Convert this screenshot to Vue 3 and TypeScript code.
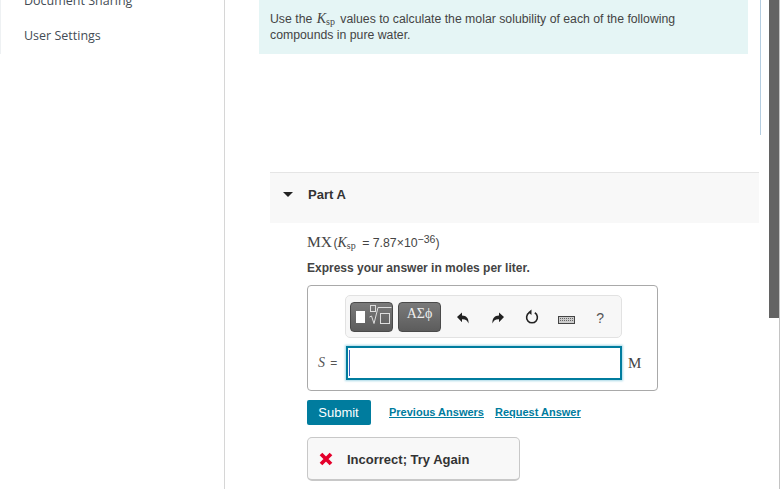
<script setup lang="ts">
const navItems: string[] = ['Document Sharing', 'User Settings']
</script>

<template>
  <div class="page">
    <aside class="side">
      <ul class="nav">
        <li v-for="item in navItems" :key="item">{{ item }}</li>
      </ul>
    </aside>
    <main class="main">
      <section class="intro-wrap">
        <div class="intro">
          Use the <i class="m k">K<sub>sp</sub></i> values to calculate the molar solubility of each of the following compounds in pure water.
        </div>
      </section>
      <section class="part">
        <header class="part-head">
          <span class="caret"></span>
          <span>Part A</span>
        </header>
        <div class="part-body">
          <p class="formula"><span class="m mx">MX</span> (<i class="m k2">K<sub>sp</sub></i> = 7.87×10<sup>−36</sup>)</p>
          <p class="express">Express your answer in moles per liter.</p>
          <div class="answer">
            <div class="toolbar">
              <button class="tool t1" aria-label="Templates">
                <span class="sq"></span>
                <svg width="23" height="24" viewBox="0 0 23 24" fill="none" stroke="#ddd" stroke-width="1">
                  <rect x="1.500" y="0.500" width="5" height="6" />
                  <path d="M0.500 12l2-1 2.500 7.500L9 2.500h13.500" />
                  <rect x="11.500" y="8.500" width="9" height="10" />
                </svg>
              </button>
              <button class="tool t2">ΑΣϕ</button>
              <div class="actions">
                <span class="cell"><svg class="arrow" width="14" height="14" viewBox="0 0 14 14" fill="#222"><path d="M1 6l5-4.500V4.500c4.500 0 7 3 6.500 8-1-3-3-4.500-6.500-4.300v3z" /></svg></span>
                <span class="cell"><svg class="arrow" width="14" height="14" viewBox="0 0 14 14" fill="#222"><path d="M13 6L8 1.500V4.500c-4.500 0-7 3-6.500 8 1-3 3-4.500 6.500-4.300v3z" /></svg></span>
                <span class="cell"><svg width="16" height="16" viewBox="0 0 16 16" fill="none" stroke="#222" stroke-width="1.600"><path d="M5.200 3.800a5.400 5.400 0 1 0 5.600 0" /><path d="M7.500 0.500v5.600L4.200 3.300z" fill="#222" stroke="none" /></svg></span>
                <span class="cell"><svg class="kbd" width="17" height="8" viewBox="0 0 17 8" fill="#ccc" stroke="#444" stroke-width="1"><rect x="0.500" y="0.500" width="16" height="7" /><path d="M2 2.500h13M2 4.500h13" stroke-dasharray="1 1" stroke="#666" /></svg></span>
                <span class="cell help">?</span>
              </div>
            </div>
            <div class="input-row">
              <span class="label"><i class="m s">S</i> =</span>
              <div class="input"><span class="cursor"></span></div>
              <span class="m unit">M</span>
            </div>
          </div>
          <div class="submit-row">
            <button class="submit">Submit</button>
            <a class="link">Previous Answers</a>
            <a class="link">Request Answer</a>
          </div>
          <div class="feedback">
            <svg class="x" width="14" height="14" viewBox="0 0 14 14" fill="none" stroke="#e4002b" stroke-width="3.800"><path d="M2 2l10 10M12 2L2 12" /></svg>
            <span>Incorrect; Try Again</span>
          </div>
        </div>
      </section>
    </main>
    <div class="scroll"><div class="thumb"></div></div>
  </div>
</template>

<style>
html, body { margin: 0; background: #fff; }
</style>

<style scoped>
.page {
  width: 780px;
  height: 489px;
  overflow: hidden;
  display: flex;
  background: #fff;
  font-family: "Liberation Sans", Arial, sans-serif;
  color: #333;
}
.side {
  width: 224px;
  flex: none;
  border-right: 1px solid #d6d6d6;
}
.nav {
  list-style: none;
  margin: -8px 0 0;
  padding: 0 0 0 23px;
  height: 62px;
  border-left: 1px solid #eef1f3;
  font-family: "Open Sans", sans-serif;
  font-size: 12.500px;
  line-height: 18px;
  color: #444c55;
}
.nav li { margin-bottom: 17px; }
.main {
  width: 544px;
  flex: none;
}
.intro-wrap {
  margin-left: 34px;
  width: 501px;
  height: 135px;
  border-right: 1px solid #b4cde0;
}
.intro {
  width: 489px;
  height: 54px;
  box-sizing: border-box;
  padding: 11px 60px 0 11px;
  background: #e5f5f5;
  font-size: 12.280px;
  line-height: 16px;
  color: #444;
}
.m { font-family: "Liberation Serif", serif; }
.k { font-size: 14px; margin: 0 2px 0 1px; }
.k sub, .k2 sub { font-style: normal; font-size: 10px; line-height: 0; vertical-align: -2px; }
.part {
  margin: 37px 0 0 45px;
  width: 489px;
}
.part-head {
  height: 51px;
  box-sizing: border-box;
  border-top: 1px solid #e5e5e5;
  background: #f8f8f8;
  display: flex;
  align-items: center;
  gap: 15px;
  padding: 0 0 7px 13px;
  font-size: 13px;
  font-weight: 700;
  color: #333;
}
.caret {
  width: 0;
  height: 0;
  border-left: 5px solid transparent;
  border-right: 5px solid transparent;
  border-top: 5px solid #222;
}
.part-body { padding: 0 0 0 37px; }
.formula {
  margin: 9px 0 0;
  font-size: 12.300px;
  line-height: 20px;
  color: #444;
}
.mx { font-size: 15.500px; margin-right: -2px; }
.k2 { font-size: 14px; margin-right: 3px; }
.formula sup { font-size: 10.500px; line-height: 0; vertical-align: 4px; }
.express {
  margin: 7px 0 0;
  font-size: 12px;
  font-weight: 700;
  line-height: 16px;
  color: #444;
}
.answer {
  margin-top: 9px;
  width: 349px;
  height: 104px;
  border: 1px solid #a9a9a9;
  border-radius: 4px;
  overflow: hidden;
}
.toolbar {
  margin: 9px 0 0 37px;
  width: 277px;
  height: 43px;
  border: 1px solid #e2e2e2;
  border-radius: 5px;
  background: #f7f7f7;
  display: flex;
  align-items: center;
  padding-left: 4px;
  box-sizing: border-box;
  gap: 5px;
}
.tool {
  height: 30px;
  padding: 0;
  border: 1px solid #4a4a4a;
  border-radius: 4px;
  background: linear-gradient(#7a7a7a, #5c5c5c);
  color: #eee;
  display: flex;
  align-items: center;
  justify-content: center;
}
.t1 { width: 43px; gap: 4px; justify-content: flex-start; padding-left: 5px; }
.sq { width: 9px; height: 12px; background: #fff; flex: none; }
.t1 svg { flex: none; }
.t2 {
  width: 43px;
  font-family: "Liberation Serif", serif;
  font-size: 14px;
  padding-bottom: 6px;
}
.actions {
  display: flex;
  align-items: center;
  padding-top: 1px;
}
.cell {
  width: 34.500px;
  display: flex;
  align-items: center;
  justify-content: center;
}
.arrow { margin-top: 2px; }
.kbd { margin-top: 6px; }
.help { font-size: 14px; color: #555; margin-left: -1px; margin-top: 2px; }
.input-row {
  display: flex;
  align-items: center;
  margin-top: 8px;
}
.label {
  width: 38px;
  box-sizing: border-box;
  padding-left: 10px;
  font-size: 12px;
  color: #555;
  word-spacing: 2px;
}
.s { font-size: 14px; }
.input {
  width: 276px;
  height: 34px;
  box-sizing: border-box;
  border: 2px solid #007c9e;
  box-shadow: 0 0 2px 1px #a8d8e6;
  background: #fff;
  padding: 2px 1px;
  display: flex;
}
.cursor { width: 1px; height: 26px; background: #3a5fc0; }
.unit { margin-left: 6px; font-size: 15px; color: #444; }
.submit-row {
  display: flex;
  align-items: center;
  margin-top: 9px;
  font-size: 11px;
}
.submit {
  width: 64px;
  height: 25px;
  border: none;
  border-radius: 2px;
  background: #007c9e;
  color: #fff;
  font-family: "Liberation Sans", Arial, sans-serif;
  font-size: 13px;
  padding: 0 1px 0 0;
  margin-right: 18px;
}
.link {
  font-weight: 700;
  color: #007c9e;
  text-decoration: underline;
  margin: 0 11px 2px 0;
}
.feedback {
  margin-top: 12px;
  width: 213px;
  height: 44px;
  box-sizing: border-box;
  border: 1px solid #c8c8c8;
  border-bottom-width: 2px;
  border-radius: 5px;
  background: #f8f8f8;
  display: flex;
  align-items: center;
  padding: 1px 0 0 11px;
  gap: 14px;
  font-size: 13px;
  font-weight: 700;
  color: #333;
}
.scroll {
  width: 11px;
  flex: none;
  box-sizing: border-box;
  border-right: 1px solid #c4c4c4;
}
.thumb { width: 10px; height: 318px; background: #636363; }
</style>
